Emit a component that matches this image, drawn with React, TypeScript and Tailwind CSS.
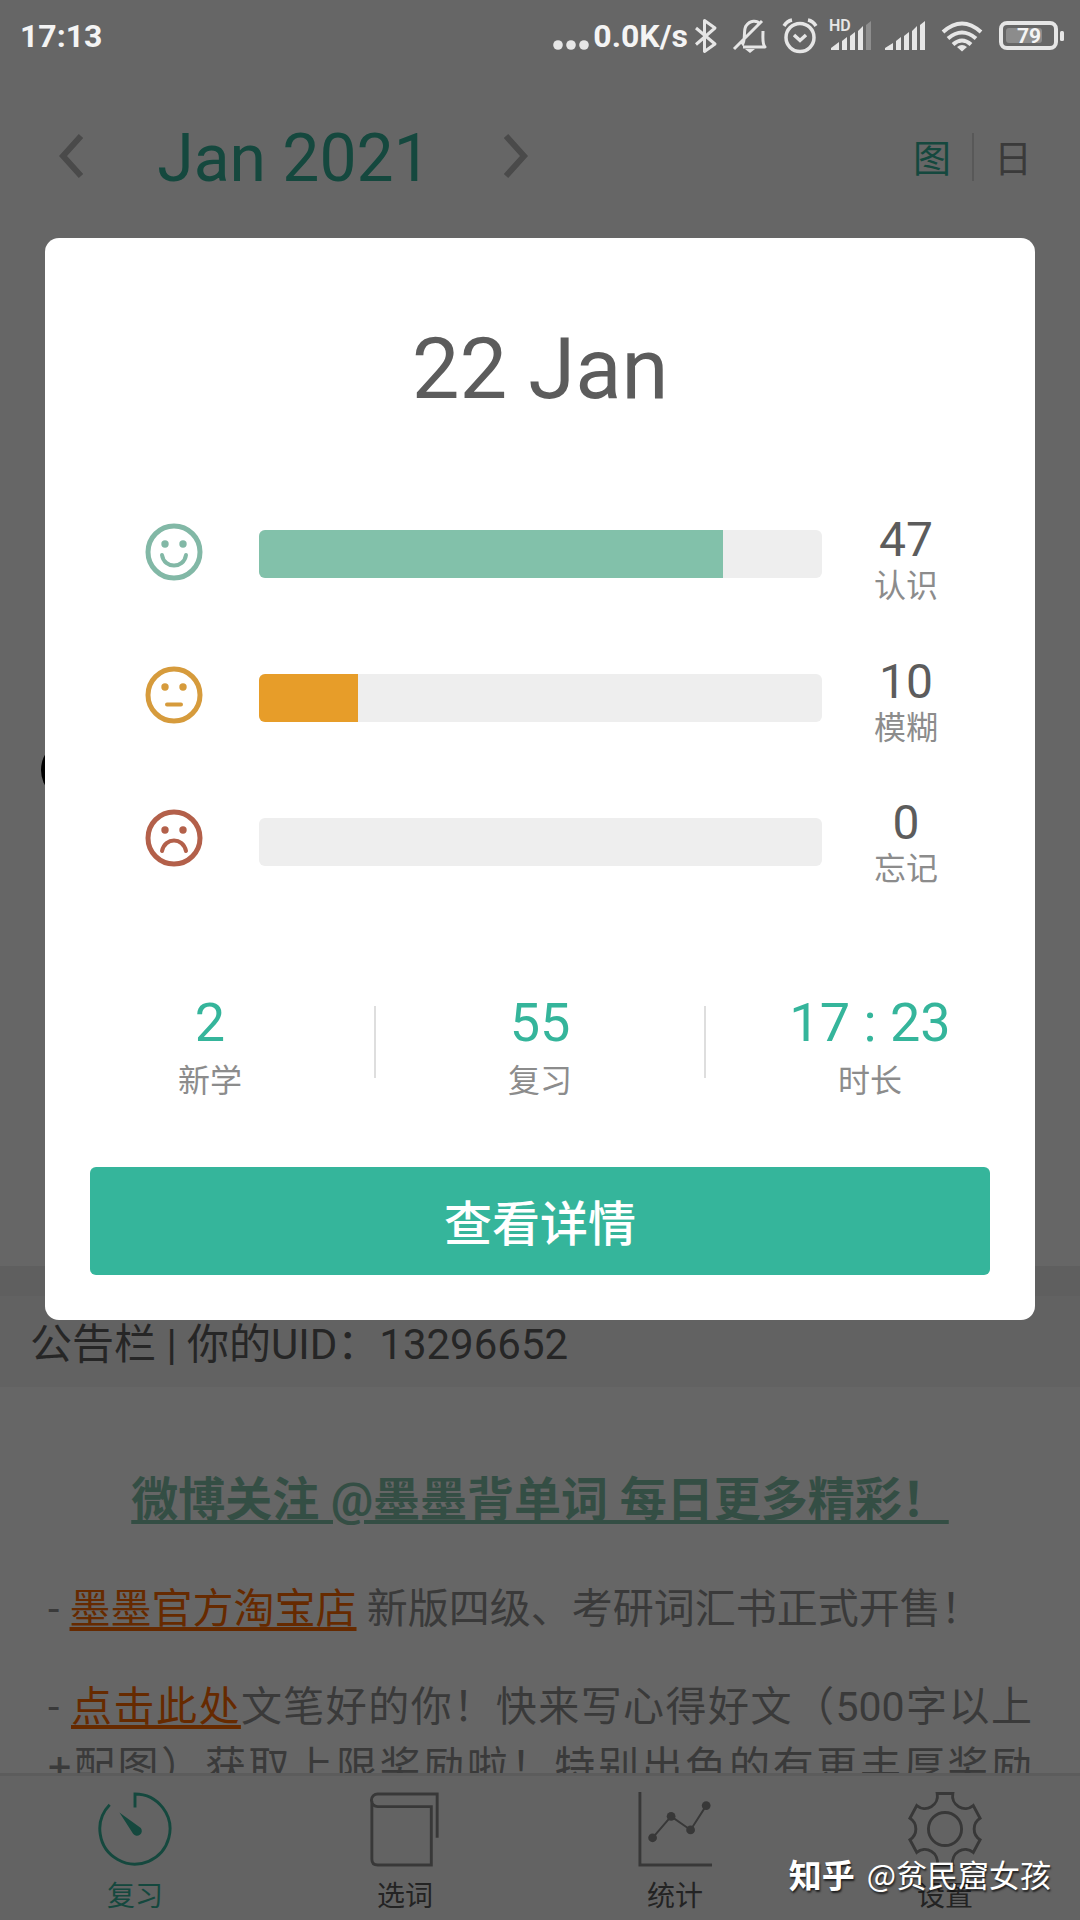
import React from "react";

const page = "font-['Roboto','Noto_Sans_CJK_SC',sans-serif]";

function Face({ color, mouth }: { color: string; mouth: string }) {
  return (
    <svg className="size-[58px]" viewBox="0 0 58 58" fill="none" stroke={color} aria-hidden="true">
      <circle cx="29" cy="29" r="26" strokeWidth="5" />
      <circle cx="20" cy="21" r="3.7" fill={color} stroke="none" />
      <circle cx="38" cy="21" r="3.7" fill={color} stroke="none" />
      <path d={mouth} strokeWidth="4" strokeLinecap="round" />
    </svg>
  );
}

const ratings = [
  { label: "认识", count: 47, color: "#82b8a6", fill: "bg-[#82c1aa]", mouth: "M17 32C19 46 39 46 41 32" },
  { label: "模糊", count: 10, color: "#d69b3c", fill: "bg-[#e79d29]", mouth: "M22 38.500H36" },
  { label: "忘记", count: 0, color: "#b3604a", fill: "bg-[#b3604a]", mouth: "M17 42C20 28 38 28 41 42" },
];
const total = ratings.reduce((sum, r) => sum + r.count, 0);

const stats = [
  { label: "新学", value: "2" },
  { label: "复习", value: "55" },
  { label: "时长", value: "17 : 23" },
];

function StatusBar() {
  return (
    <div className="flex h-[72px] items-center justify-between pl-5 pr-2 text-[#f4f4f4]">
      <span className="text-[32px] font-bold leading-none">17:13</span>
      <div className="flex items-center">
        <svg className="mr-1 h-[40px] w-[36px]" viewBox="0 0 36 40" fill="#e6e6e6" aria-hidden="true">
          <circle cx="5" cy="29" r="4.800" /><circle cx="18" cy="29" r="4.800" /><circle cx="31" cy="29" r="4.800" />
        </svg>
        <span className="mr-0.5 text-[32px] font-bold leading-none">0.0K/s</span>
        <svg className="h-[40px] w-[382px]" viewBox="690 16 382 40" fill="none" stroke="#e6e6e6" strokeWidth="3" aria-hidden="true">
          <path d="M696 28L715 44L704.500 51.500V20.500L715 28L696 44.500" strokeLinejoin="round" />
          <path d="M742 45C746 42 743 30 746 26C750 20 757 20 760 24M763 31C763 38 762 44 765 47H743M734 49L762 21" strokeLinejoin="round" />
          <path d="M745 49H755L750 53Z" fill="#e6e6e6" stroke="none" />
          <circle cx="800" cy="37.500" r="14" strokeWidth="3.500" />
          <path d="M794 35L800 40.500L806 35M784 26Q787 21 792 20M808 20Q813 21 816 26" strokeWidth="3.500" />
          <g fill="#e6e6e6" stroke="none">
            <path d="M831 50V48L839 42V50ZM842 50V41L847 37V50ZM850 50V36L855 32V50ZM858 50V31L863 26V50Z" />
            <path d="M866 50V25L871 21V50Z" fill="#8e8e8e" />
            <path d="M885 50V48L893 43V50ZM896 50V41L901 37V50ZM904 50V36L909 32V50ZM912 50V31L917 26V50ZM920 50V25L925 21V50Z" />
            <path d="M957 47Q962 43 967 47L962 51.500Z" />
          </g>
          <path d="M943 32Q962 15 981 32M948 38.500Q962 26.500 976 38.500M953 44.500Q962 36.500 971 44.500" strokeWidth="4" />
          <rect x="1001" y="23" width="55" height="25" rx="6" strokeWidth="4" />
          <rect x="1006" y="28" width="36" height="15" rx="3" fill="#8c8c8c" stroke="none" />
          <rect x="1060" y="31" width="4" height="10" rx="1.500" fill="#e6e6e6" stroke="none" />
          <text x="829" y="31" fontSize="16" fontWeight="600" fill="#e6e6e6" stroke="none">HD</text>
          <text x="1029" y="43" fontSize="21" fontWeight="700" textAnchor="middle" fill="#f4f4f4" stroke="none">79</text>
        </svg>
      </div>
    </div>
  );
}

function Header() {
  return (
    <header className="flex items-center justify-between pl-10 pr-7 pt-[110px]">
      <div className="flex items-center">
        <button aria-label="上个月" className="flex h-[90px] w-[64px] items-center justify-center">
          <svg className="h-[50px] w-[26px]" viewBox="0 0 26 50" fill="none" stroke="#b8b8b8" strokeWidth="6" aria-hidden="true"><path d="M22 4L4 24L22 44" /></svg>
        </button>
        <h1 className="w-[380px] pt-1 text-center text-[66px] leading-[90px] text-[#35b59b]">Jan 2021</h1>
        <button aria-label="下个月" className="flex h-[90px] w-[64px] items-center justify-center">
          <svg className="h-[50px] w-[26px]" viewBox="0 0 26 50" fill="none" stroke="#b8b8b8" strokeWidth="6" aria-hidden="true"><path d="M3 4L21 24L3 44" /></svg>
        </button>
      </div>
      <div className="flex items-center text-[38px] leading-[48px]">
        <button className="px-[21px] pt-1 text-[#35b59b]">图</button>
        <span className="h-12 w-0.5 bg-[#dcdcdc]" />
        <button className="px-[20px] pt-1 text-[#929292]">日</button>
      </div>
    </header>
  );
}

function Notices() {
  return (
    <section className="shrink-0 bg-white">
      <div className="h-[30px] bg-[#eeeeee]" />
      <h2 className="bg-[#f6f6f6] px-[30px] pt-[6px] text-[42px] leading-[85px] text-[#606060]">公告栏 | 你的UID：13296652</h2>
      <div className="h-[386px] overflow-hidden px-12 pt-20 text-[41px] leading-[60px] text-[#929292]">
        <p className="text-center text-[47px] font-bold leading-[66px] text-[#82c2aa]">
          <a href="#weibo" className="underline decoration-4 underline-offset-4">微博关注 @墨墨背单词 每日更多精彩！</a>
        </p>
        <p className="mt-[46px]">- <a href="#shop" className="text-[#ff6a00] underline decoration-4 underline-offset-4">墨墨官方淘宝店</a> 新版四级、考研词汇书正式开售！</p>
        <p className="mt-[38px] text-justify [text-align-last:justify]">- <a href="#article" className="text-[#ff6a00] underline decoration-4 underline-offset-4">点击此处</a>文笔好的你！快来写心得好文（500字以上+配图）获取上限奖励啦！特别出色的有更丰厚奖励</p>
      </div>
    </section>
  );
}

const tabs = [
  {
    label: "复习", active: true,
    icon: (
      <>
        <path d="M38 16V2A36 36 0 1 1 12 13" strokeWidth="3" />
        <path d="M22 21L44 37A4.500 4.500 0 1 1 36 43Z" fill="currentColor" stroke="none" />
      </>
    ),
  },
  {
    label: "选词", active: false,
    icon: <path d="M71 47V2H10A6.500 6.500 0 0 0 10 15H65V75H10Q4 75 4 69V9" strokeWidth="3" />,
  },
  {
    label: "统计", active: false,
    icon: (
      <>
        <path d="M2 0V75H76" strokeWidth="3" />
        <path d="M15 47L34 25L54 39L70 14" strokeWidth="2" />
        <g fill="currentColor" stroke="none"><circle cx="15" cy="47" r="4.500" /><circle cx="34" cy="25" r="4.500" /><circle cx="54" cy="39" r="4.500" /><circle cx="70" cy="14" r="4.500" /></g>
      </>
    ),
  },
  {
    label: "设置", active: false,
    icon: (
      <>
        <circle cx="38" cy="38" r="17" strokeWidth="3" />
        <path d="M30 1.500H46A13 13 0 0 0 67 14L74 27A13 13 0 0 0 74 49L67 62A13 13 0 0 0 46 74.500H30A13 13 0 0 0 9 62L2 49A13 13 0 0 0 2 27L9 14A13 13 0 0 0 30 1.500Z" strokeWidth="3" />
      </>
    ),
  },
];

function TabBar() {
  return (
    <nav className="grid h-[147px] shrink-0 grid-cols-4 border-t-[3px] border-[#e6e6e6] bg-[#f8f8f8]">
      {tabs.map((t) => (
        <button key={t.label} className={t.active ? "flex flex-col items-center pt-[15px] text-[#35b59b]" : "flex flex-col items-center pt-[15px] text-[#8c8c8c]"}>
          <svg className="size-[76px]" viewBox="-1 -1 78 78" fill="none" stroke="currentColor" aria-hidden="true">{t.icon}</svg>
          <span className={t.active ? "mt-[10px] text-[28px] leading-10" : "mt-[10px] text-[28px] leading-10 text-[#585858]"}>{t.label}</span>
        </button>
      ))}
    </nav>
  );
}

function DayDialog() {
  return (
    <div role="dialog" aria-label="22 Jan" className="rounded-[14px] bg-white pb-[45px] pt-[76px]">
      <h2 className="text-center text-[85px] leading-[110px] text-[#5c5c5c]">22 Jan</h2>
      <div className="mt-[93px] flex justify-between pl-[100px] pr-[84px]">
        <div className="flex h-[350px] flex-col justify-between pt-[6px]">
          {ratings.map((r) => <Face key={r.label} color={r.color} mouth={r.mouth} />)}
        </div>
        <div className="ml-14 mr-[39px] flex flex-1 flex-col gap-24 pt-[13px]">
          {ratings.map((r) => (
            <div key={r.label} className="h-12 overflow-hidden rounded-md bg-[#eeeeee]">
              <div className={"h-full " + r.fill} style={{ width: (r.count / total) * 100 + "%" }} />
            </div>
          ))}
        </div>
        <dl className="flex h-[375px] w-[90px] flex-col justify-between text-center">
          {ratings.map((r) => (
            <div key={r.label} className="flex flex-col-reverse">
              <dt className="text-[32px] leading-[46px] text-[#8c8c8c]">{r.label}</dt>
              <dd className="text-[48px] leading-[46px] text-[#5c5c5c]">{r.count}</dd>
            </div>
          ))}
        </dl>
      </div>
      <dl className="mt-[97px] grid grid-cols-3 text-center">
        {stats.map((s, i) => (
          <div key={s.label} className="relative flex flex-col-reverse">
            <dt className="text-[32px] leading-[48px] text-[#8c8c8c]">{s.label}</dt>
            <dd className="text-[54px] leading-[68px] text-[#35b59b]">{s.value}</dd>
            {i > 0 && <span className="absolute -left-px top-[17px] h-[72px] w-0.5 bg-[#dedede]" />}
          </div>
        ))}
      </dl>
      <div className="mt-[62px] px-[45px]">
        <button className="h-[108px] w-full rounded-md bg-[#35b59b] pt-2 text-[48px] font-medium leading-[72px] text-white">查看详情</button>
      </div>
    </div>
  );
}

export default function App() {
  return (
    <div className={"relative flex h-screen flex-col overflow-hidden bg-white " + page}>
      <Header />
      <main className="relative flex-1">
        <span className="absolute left-[41px] top-[534px] z-20 size-16 rounded-full bg-black" />
      </main>
      <Notices />
      <TabBar />
      <div className="absolute inset-0 z-10 bg-black/60" />
      <div className="absolute inset-x-0 top-0 z-30 px-[45px] pt-[238px]"><DayDialog /></div>
      <div className="absolute inset-x-0 top-0 z-30"><StatusBar /></div>
      <div className="absolute bottom-6 right-[29px] z-30 flex items-center gap-3 font-['Noto_Sans_CJK_SC',sans-serif] text-[31px] leading-[44px] text-white [text-shadow:1px_2px_2px_rgba(0,0,0,0.7)]">
        <span className="text-[33px] font-bold">知乎</span>
        <span>@贫民窟女孩</span>
      </div>
    </div>
  );
}
